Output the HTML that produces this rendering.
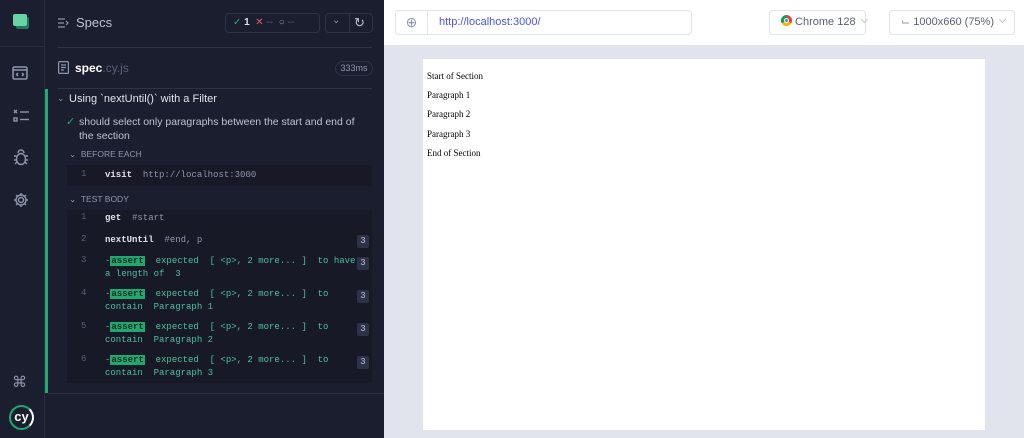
<!DOCTYPE html>
<html><head><meta charset="utf-8"><style>
*{box-sizing:border-box;margin:0;padding:0}
body{width:1024px;height:438px;overflow:hidden;background:#1b1e2e;font-family:"Liberation Sans",sans-serif;position:relative}
.abs{position:absolute}
.nav{left:0;top:0;width:45px;height:438px;background:#1b1e2e;border-right:1px solid #2a2d3e}
.rep{left:45px;top:0;width:339px;height:438px;background:#1b1e2e}
.mono{font-family:"Liberation Mono",monospace;font-size:9px}
.code{background:#171926}
.ln{color:#5a5f7a;position:absolute;left:14px}
.row{position:absolute;left:38px;right:14px;line-height:13px;white-space:normal}
.w{color:#e1e3ed;font-weight:bold}
.g{color:#9095ad}
.t{color:#49c19c}
.a{background:#1fa971;color:#0e2a1e;padding:0 1px;font-weight:bold}
.badge{position:absolute;right:3px;width:12px;height:13px;background:#2e3247;color:#c0c3d4;border-radius:2px;font-size:9px;text-align:center;line-height:13px}
.right{left:384px;top:0;width:640px;height:438px;background:#e1e3ed}
.box{position:absolute;top:10px;height:25px;border:1px solid #e1e3ed;border-radius:4px;background:#fff;font-size:11px;color:#5a5f7a;line-height:23px;white-space:nowrap}
.chev{display:inline-block;width:5px;height:5px;border-right:1px solid #c0c3d4;border-bottom:1px solid #c0c3d4;transform:rotate(45deg);vertical-align:3px;margin-left:6px}
</style></head><body>
<div class="abs nav">
  <div class="abs" style="left:16px;top:17px;width:13px;height:12px;background:#1f7a5a;border-radius:2px"></div>
  <div class="abs" style="left:13px;top:14px;width:14px;height:12px;background:#69d3a7;border-radius:2px"></div>
  <div class="abs" style="left:0;top:46px;width:44px;border-top:1px solid #2a2d3e"></div>
  <svg class="abs" style="left:12px;top:66px" width="18" height="16" viewBox="0 0 18 16" fill="none" stroke="#9095ad" stroke-width="1.5"><rect x="1" y="1" width="14" height="12" rx="1.5"/><line x1="1" y1="4" x2="15" y2="4"/><path d="M6 7l-1.5 1.5L6 10M10 7l1.5 1.5L10 10"/></svg>
  <svg class="abs" style="left:13px;top:109px" width="18" height="14" viewBox="0 0 18 14" fill="none" stroke="#9095ad" stroke-width="1.4"><path d="M1 1l3 3M4 1L1 4"/><line x1="7" y1="3" x2="16" y2="3"/><rect x="1" y="9" width="3" height="3"/><line x1="7" y1="10.5" x2="16" y2="10.5"/></svg>
  <svg class="abs" style="left:13px;top:149px" width="16" height="17" viewBox="0 0 16 17" fill="none" stroke="#9095ad" stroke-width="1.4"><ellipse cx="8" cy="10" rx="4.5" ry="5.5"/><path d="M5 4a3 3 0 016 0M1 7h2.5M12.5 7H15M1 11h2.5M12.5 11H15M2 15l2-2M14 15l-2-2"/></svg>
  <svg class="abs" style="left:13px;top:192px" width="16" height="16" viewBox="0 0 16 16" fill="none" stroke="#9095ad" stroke-width="1.4"><circle cx="8" cy="8" r="2.5"/><path d="M8 1v2M8 13v2M1 8h2M13 8h2M3 3l1.4 1.4M11.6 11.6L13 13M3 13l1.4-1.4M11.6 4.4L13 3"/><circle cx="8" cy="8" r="5"/></svg>
  <div class="abs" style="left:12px;top:373px;color:#9095ad;font-size:15px">⌘</div>
  <div class="abs" style="left:9px;top:405px;width:25px;height:25px;border-radius:50%;border:2px solid #1fa971;background:#1b1e2e;color:#fff;font-weight:bold;font-size:13px;line-height:20px;text-align:center;border-right-color:#fff">cy</div>
</div>
<div class="abs rep">
  <svg class="abs" style="left:13px;top:18px" width="12" height="10" viewBox="0 0 12 10" stroke="#9095ad" stroke-width="1.2" fill="none"><path d="M0 1h7M0 5h6M0 9h7M8 3l2 2-2 2"/></svg>
  <div class="abs" style="left:31px;top:15px;color:#bfc2d4;font-size:13px">Specs</div>
  <div class="abs" style="left:180px;top:13px;width:95px;height:20px;border:1px solid #2e3247;border-radius:4px;font-size:10px;line-height:18px;padding-left:7px;white-space:nowrap"><span style="color:#1fa971">✓</span> <b style="color:#e1e3ed">1</b> &nbsp;<span style="color:#e45770">✕</span> <span style="color:#5a5f7a">--</span> &nbsp;<span style="color:#9095ad">○</span> <span style="color:#5a5f7a">--</span></div>
  <div class="abs" style="left:280px;top:13px;width:48px;height:20px;border:1px solid #2e3247;border-radius:4px"><div class="abs" style="left:23px;top:0;height:18px;border-left:1px solid #2e3247"></div><span class="abs" style="left:6px;top:1px;color:#9095ad;font-size:10px">⌄</span><span class="abs" style="left:28px;top:1px;color:#bfc2d4;font-size:13px">↻</span></div>
  <div class="abs" style="left:12px;top:47px;width:315px;border-top:1px solid #2e3247"></div>
  <svg class="abs" style="left:13px;top:61px" width="11" height="13" viewBox="0 0 11 13" fill="none" stroke="#9095ad" stroke-width="1.2"><rect x="0.6" y="0.6" width="9.8" height="11.8" rx="1"/><path d="M3 4h5M3 6.5h5M3 9h3"/></svg>
  <div class="abs" style="left:30px;top:61px;font-size:12px;color:#fff;font-weight:bold">spec<span style="color:#5a5f7a;font-weight:normal">.cy.js</span></div>
  <div class="abs" style="left:290px;top:61px;width:38px;height:15px;border:1px solid #2e3247;border-radius:8px;color:#9095ad;font-size:9px;text-align:center;line-height:13px">333ms</div>
  <div class="abs" style="left:12px;top:88px;width:315px;border-top:1px solid #2e3247"></div>
  <div class="abs" style="left:0;top:89px;width:3px;height:304px;background:#1fa971"></div>
  <div class="abs" style="left:12px;top:93px;color:#9095ad;font-size:9px">⌄</div>
  <div class="abs" style="left:24px;top:93px;color:#e1e3ed;font-size:11px">Using `nextUntil()` with a Filter</div>
  <div class="abs" style="left:21px;top:115px;color:#1fa971;font-size:11px">✓</div>
  <div class="abs" style="left:34px;top:115px;width:280px;color:#bfc2d4;font-size:10.5px;line-height:14px">should select only paragraphs between the start and end of the section</div>
  <div class="abs" style="left:24px;top:149px;color:#9095ad;font-size:8.5px">⌄ &nbsp;BEFORE EACH</div>
  <div class="abs code mono" style="left:22px;top:165px;width:305px;height:21px"><span class="ln" style="top:4px">1</span><div class="row" style="top:4px"><span class="w">visit</span>&nbsp; <span class="g">http://localhost:3000</span></div></div>
  <div class="abs" style="left:24px;top:194px;color:#9095ad;font-size:8.5px">⌄ &nbsp;TEST BODY</div>
  <div class="abs code mono" style="left:22px;top:210px;width:305px;height:173px">
    <span class="ln" style="top:2px">1</span><div class="row" style="top:2px"><span class="w">get</span>&nbsp; <span class="g">#start</span></div>
    <span class="ln" style="top:24px">2</span><div class="row" style="top:24px"><span class="w">nextUntil</span>&nbsp; <span class="g">#end, p</span></div><span class="badge" style="top:25px">3</span>
    <span class="ln" style="top:45px">3</span><div class="row t" style="top:45px"><span class="g">-</span><span class="a">assert</span>&nbsp; expected&nbsp; [ &lt;p&gt;, 2 more... ]&nbsp; to have a length of&nbsp; 3</div><span class="badge" style="top:47px">3</span>
    <span class="ln" style="top:78px">4</span><div class="row t" style="top:78px"><span class="g">-</span><span class="a">assert</span>&nbsp; expected&nbsp; [ &lt;p&gt;, 2 more... ]&nbsp; to<br>contain&nbsp; Paragraph 1</div><span class="badge" style="top:80px">3</span>
    <span class="ln" style="top:111px">5</span><div class="row t" style="top:111px"><span class="g">-</span><span class="a">assert</span>&nbsp; expected&nbsp; [ &lt;p&gt;, 2 more... ]&nbsp; to<br>contain&nbsp; Paragraph 2</div><span class="badge" style="top:113px">3</span>
    <span class="ln" style="top:144px">6</span><div class="row t" style="top:144px"><span class="g">-</span><span class="a">assert</span>&nbsp; expected&nbsp; [ &lt;p&gt;, 2 more... ]&nbsp; to<br>contain&nbsp; Paragraph 3</div><span class="badge" style="top:146px">3</span>
  </div>
  <div class="abs" style="left:3px;top:393px;width:336px;border-top:1px solid #2e3247"></div>
</div>
<div class="abs right">
  <div class="abs" style="left:0;top:0;width:640px;height:46px;background:#fff;border-bottom:1px solid #e1e3ed"></div>
  <div class="box" style="left:11px;width:297px"><div class="abs" style="left:0;top:0;width:32px;height:23px;border-right:1px solid #e1e3ed;text-align:center;color:#9095ad;font-size:14px">⊕</div><span class="abs" style="left:43px;color:#4956e3">http://localhost:3000/</span></div>
  <div class="box" style="left:385px;width:97px;padding-left:11px"><span style="display:inline-block;width:11px;height:11px;border-radius:50%;background:conic-gradient(#db4437 0 120deg,#f4b400 120deg 240deg,#0f9d58 240deg);vertical-align:-1px;position:relative"><span style="position:absolute;left:3px;top:3px;width:5px;height:5px;border-radius:50%;background:#4285f4;border:1px solid #fff"></span></span> Chrome 128<span class="chev"></span></div>
  <div class="box" style="left:505px;width:126px;padding-left:11px"><span style="color:#9095ad">⌙</span> 1000x660 (75%)<span class="chev"></span></div>
  <div class="abs" style="left:39px;top:59px;width:562px;height:371px;background:#fff;font-family:'Liberation Serif',serif;font-size:9px;color:#000;padding:8px 4px;line-height:19.2px">Start of Section<br>Paragraph 1<br>Paragraph 2<br>Paragraph 3<br>End of Section</div>
</div>
</body></html>
